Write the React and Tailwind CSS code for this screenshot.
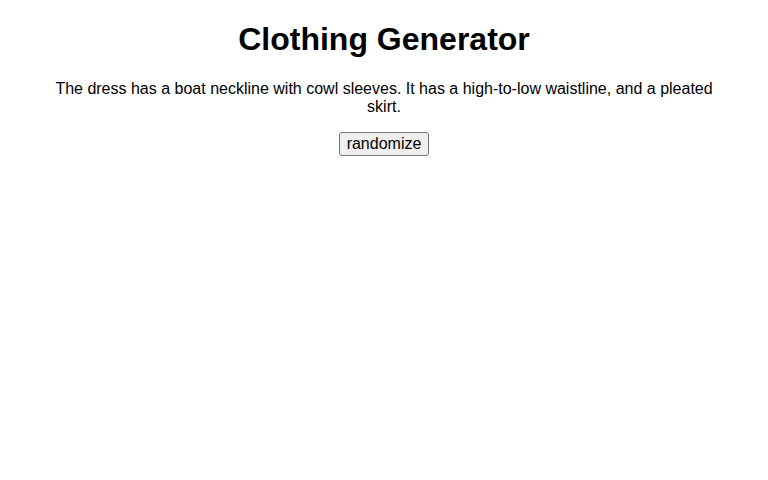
export default function App() {
  return (
    <div className="min-h-screen bg-white px-12 text-center text-black font-['Liberation_Sans',Arial,sans-serif] leading-[normal]">
      <h1 className="pt-[21.44px] mb-[21.44px] text-[32px] font-bold">Clothing Generator</h1>
      <p className="mb-4 text-[16px]">
        The dress has a boat neckline with cowl sleeves. It has a high-to-low waistline, and a pleated skirt.
      </p>
      <button className="rounded-[3px] border border-[#767676] bg-[#efefef] px-[7px] py-[2px] text-[16px]">
        randomize
      </button>
    </div>
  );
}
